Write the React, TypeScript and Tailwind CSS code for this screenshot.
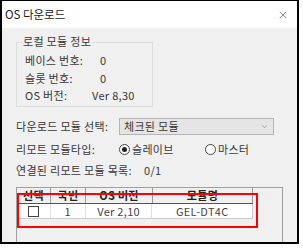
import { ChevronDown, X } from "lucide-react";

const font = "font-['Noto_Sans_CJK_KR','Noto_Sans',sans-serif]";

function InfoRow({ label, value, valueClass }: { label: string; value: string; valueClass: string }) {
  return (
    <div className="flex h-[17.5px] items-center">
      <span className="w-[67px]">{label}</span>
      <span className={valueClass}>{value}</span>
    </div>
  );
}

function Radio({ checked, label }: { checked?: boolean; label: string }) {
  return (
    <div className="flex items-center gap-[2px]">
      <span className="flex h-[11px] w-[11px] items-center justify-center rounded-full border border-[#444] bg-white">
        {checked && <span className="h-[5px] w-[5px] rounded-full bg-[#222]" />}
      </span>
      <span>{label}</span>
    </div>
  );
}

export default function App() {
  return (
    <div className={`h-[248px] w-[303px] bg-white ${font} text-[11px] leading-none tracking-[0.3px] text-[#383838]`}>
      <div className="flex h-[244px] w-[299px] flex-col overflow-hidden border-2 border-t-[1px] border-black">
        {/* Title */}
        <div className="flex h-[27px] shrink-0 items-center justify-between bg-white pl-[3px] pr-[8px]">
          <span className="text-[11.5px] tracking-normal text-[#222]">OS 다운로드</span>
          <X size={12} strokeWidth={1.5} className="text-[#666]" />
        </div>

        {/* Body */}
        <div className="flex flex-1 flex-col bg-[#f0f0f0] pl-[14px]">
          {/* Group box */}
          <div className="relative mt-[14px] h-[65px] w-[137px] border border-[#dcdcdc]">
            <span className="absolute left-[5px] top-[-7px] bg-[#f0f0f0] px-[1px]">로컬 모듈 정보</span>
            <div className="flex flex-col pl-[8px] pt-[9px]">
              <InfoRow label="베이스 번호:" value="0" valueClass="ml-[8px]" />
              <InfoRow label="슬롯 번호:" value="0" valueClass="ml-[8px]" />
              <InfoRow label="OS 버전:" value="Ver 8,30" valueClass="ml-[0px]" />
            </div>
          </div>

          {/* Download module */}
          <div className="mt-[10px] flex h-[18px] items-center">
            <span className="w-[103px]">다운로드 모듈 선택:</span>
            <div className="flex h-[17px] w-[155px] items-center justify-between border border-[#b5b5b5] bg-[#e5e5e5] pl-[4px] pr-[4px]">
              <span>체크된 모듈</span>
              <ChevronDown size={9} strokeWidth={1.5} className="text-[#777]" />
            </div>
          </div>

          {/* Remote module type */}
          <div className="mt-[6px] flex h-[16px] items-center">
            <span className="w-[103px]">리모트 모듈타입:</span>
            <div className="w-[86px]">
              <Radio checked label="슬레이브" />
            </div>
            <Radio label="마스터" />
          </div>

          {/* Connected list */}
          <div className="mt-[6px] flex h-[14px] items-center">
            <span className="w-[128px]">연결된 리모트 모듈 목록:</span>
            <span>0/1</span>
          </div>

          <div className="relative mt-[10px] flex-1 w-[267px] border-l border-r border-t border-[#a0a0a0] bg-[#f0f0f0]">
            <div className="flex h-[16px] w-[236px] border-b border-[#555] font-bold text-[#222]">
              <div className="flex w-[34px] items-center justify-center border-r border-[#999]">선택</div>
              <div className="flex w-[35px] items-center justify-center border-r border-[#999]">국번</div>
              <div className="flex w-[67px] items-center justify-center border-r border-[#999]">OS 버전</div>
              <div className="flex w-[100px] items-center justify-center border-r border-[#999]">모듈명</div>
            </div>
            <div className="flex h-[15px] w-[236px] border-b border-r border-[#ccc] bg-white text-[#444]">
              <div className="flex w-[34px] items-center justify-center border-r border-[#e0e0e0]">
                <span className="h-[11px] w-[11px] border border-[#444] bg-white" />
              </div>
              <div className="flex w-[35px] items-center justify-center border-r border-[#e0e0e0]">1</div>
              <div className="flex w-[67px] items-center justify-center border-r border-[#e0e0e0]">Ver 2,10</div>
              <div className="flex w-[100px] items-center justify-center">GEL-DT4C</div>
            </div>
            {/* red highlight */}
            <div className="absolute left-[0px] top-[5px] h-[35px] w-[241px] border-2 border-[#ff0000]" />
          </div>
        </div>
      </div>
    </div>
  );
}
